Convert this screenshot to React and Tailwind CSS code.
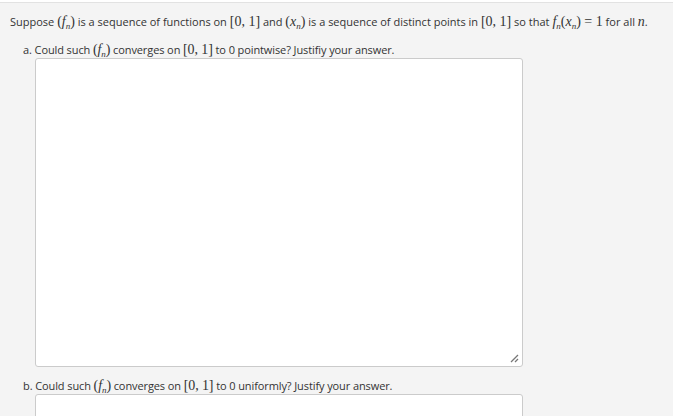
import React from 'react';

function M({ children }) {
    return <span className="font-['Liberation_Serif',serif] text-[14px] leading-none">{children}</span>;
}

function Sub({ children }) {
    return <span className="relative top-[3px] text-[9px] italic leading-none">{children}</span>;
}

function Fn() {
    return (
        <M>
            (<i>f</i><Sub>n</Sub>)
        </M>
    );
}

function Xn() {
    return (
        <M>
            (<i>x</i><Sub>n</Sub>)
        </M>
    );
}

function Interval() {
    return <M>[0, 1]</M>;
}

function Answer({ h }) {
    return (
        <div className={`relative ml-[35px] w-[488px] ${h} bg-white border border-[#cbcbcb] rounded-[3px]`}>
            <svg className="absolute right-[3px] bottom-[3px]" width="10" height="10" viewBox="0 0 10 10">
                <path d="M9 2 L2 9 M9 6 L6 9" stroke="#777" strokeWidth="1.3" fill="none" />
            </svg>
        </div>
    );
}

export default function App() {
    return (
        <div className="w-[673px] h-[416px] overflow-hidden bg-[#f4f4f4] text-[#333] font-['Open_Sans','Noto_Sans',sans-serif] text-[11px]">
            <div className="h-[3px] bg-white border-b border-[#e2e2e2]"></div>
            <div className="pt-[10px]">
                <p className="pl-[10px] h-[18px] leading-[18px] whitespace-nowrap">
                    Suppose <Fn /> is a sequence of functions on <Interval /> and <Xn /> is a sequence of distinct points in <Interval /> so that{' '}
                    <M>
                        <i>f</i><Sub>n</Sub>(<i>x</i><Sub>n</Sub>) = 1
                    </M>{' '}
                    for all <M><i>n</i></M>.
                </p>
                <p className="pl-[23px] mt-[10px] h-[18px] leading-[18px] whitespace-nowrap tracking-[-0.1px]">
                    a. Could such <Fn /> converges on <Interval /> to 0 pointwise? Justifiy your answer.
                </p>
                <div className="-mt-[1px]">
                    <Answer h="h-[309px]" />
                </div>
                <p className="pl-[23px] mt-[10px] h-[18px] leading-[18px] whitespace-nowrap tracking-[-0.1px]">
                    b. Could such <Fn /> converges on <Interval /> to 0 uniformly? Justify your answer.
                </p>
                <div className="-mt-[1px]">
                    <Answer h="h-[100px]" />
                </div>
            </div>
        </div>
    );
}
